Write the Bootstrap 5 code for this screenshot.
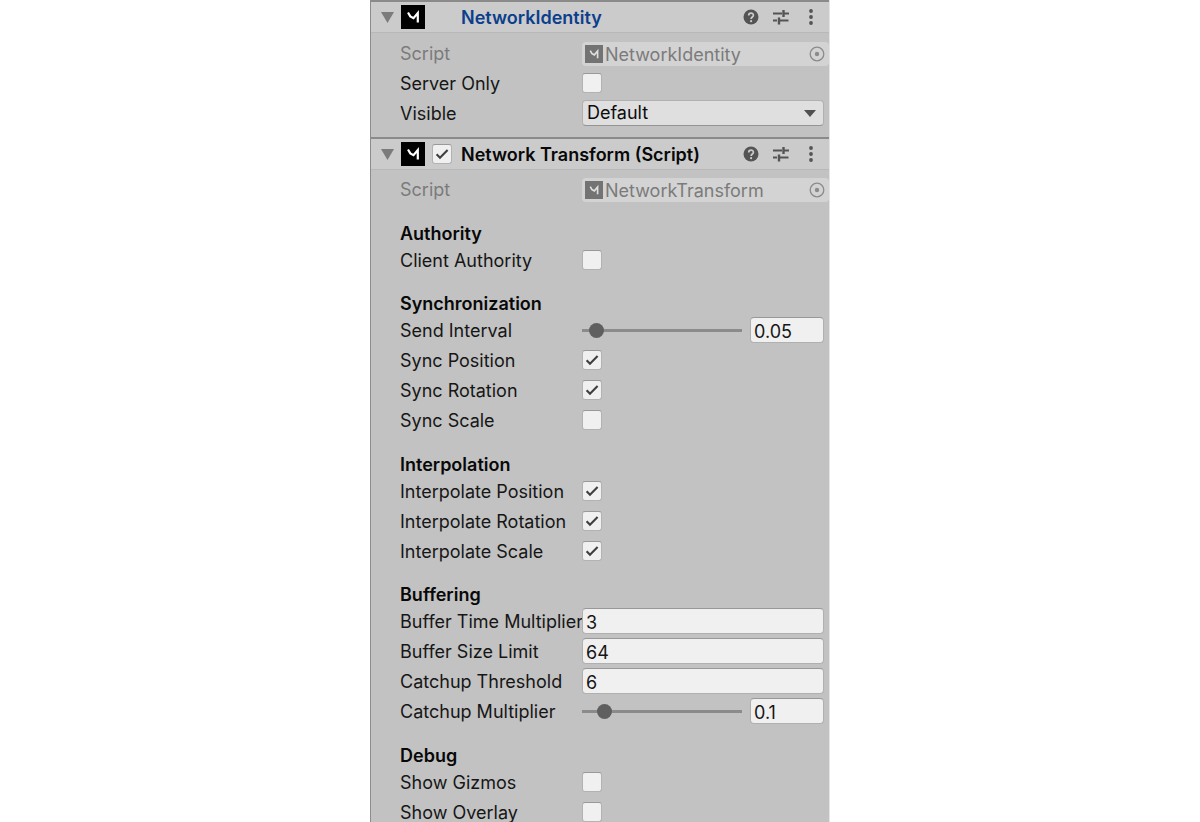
<!DOCTYPE html>
<html lang="en">
<head>
<meta charset="utf-8">
<meta name="viewport" content="width=device-width, initial-scale=1">
<title>Inspector</title>
<link href="https://cdn.jsdelivr.net/npm/bootstrap@5.3.0/dist/css/bootstrap.min.css" rel="stylesheet">
<style>
  body { font: 18px/24px Inter, "Liberation Sans", sans-serif; color: #161616; background: #fff; }
  .inspector { max-width: 460px; background: #c2c2c2; border-left: 1px solid #8c8c90; border-right: 1px solid #e4e4e4; scrollbar-width: none; }
  .inspector::-webkit-scrollbar { display: none; }

  /* component header */
  .comp-head { height: 33px; padding: 0 10px; gap: 7px; background: #cbcbcb; border-top: 2px solid #8a8a8a; border-bottom: 1px solid #b8b8b8; }
  .comp-title { font-size: 18px; line-height: 24px; padding: 2px 0 0 2px; color: #080808; }
  .comp-title a { color: #0b3f8c; }
  .plain-btn { border: 0; padding: 0; background: none; color: #545454; line-height: 0; }
  .tool-set { gap: 14px; }
  .check-space { width: 20px; }

  /* property rows */
  .comp-body { padding: 5px 5px 9px 29px; }
  .comp-body-next { padding-top: 4px; }
  .prop { display: grid; grid-template-columns: 182px minmax(0, 1fr); align-items: center; height: 30px; white-space: nowrap; }
  .prop > label { padding-top: 2px; }
  .prop-group { padding-top: 18px; }
  .prop-group:nth-of-type(even) { padding-top: 17px; }
  .prop-group legend { font-size: 18px; line-height: 24px; height: 23px; margin: 0; font-weight: 600; color: #080808; }
  .dimmed { color: #7b7b7b; }

  .tick { appearance: none; width: 20px; height: 20px; margin: 0; border: 1px solid #b2b2b2; border-top-color: #999; border-radius: 3px; background: #f0f0f0 center / 18px 18px no-repeat; }
  .tick:checked { background-image: url("data:image/svg+xml,%3Csvg xmlns='http://www.w3.org/2000/svg' viewBox='0 0 18 18'%3E%3Cpath d='M3.6 9.2 7 12.8 14.6 5' fill='none' stroke='%23404040' stroke-width='2.1'/%3E%3C/svg%3E"); }
  .text-box { width: 100%; height: 26px; padding: 2px 3px 0; border: 1px solid #b0b0b0; border-top-color: #989898; border-radius: 4px; background: #f0f0f0; color: #161616; }
  .num-box { width: 74px; }
  .drop { appearance: none; width: 100%; height: 26px; padding: 0 4px; border: 1px solid #b0b0b0; border-bottom-color: #949494; border-radius: 4px; color: #0c0c0c;
    background: #dfdfdf url("data:image/svg+xml,%3Csvg xmlns='http://www.w3.org/2000/svg' viewBox='0 0 12 7'%3E%3Cpath d='M0 0H12L6 7z' fill='%23505050'/%3E%3C/svg%3E") right 7px center / 12px 7px no-repeat; }
  .obj-field { height: 24px; margin: 1px -5px 0 0; padding-left: 3px; border-radius: 4px; background: #d3d3d3; }
  .obj-icon { background: #737373; color: #dedede; }
  .obj-field input { min-width: 0; height: 24px; padding: 2px 0 0 2px; border: 0; background: none; color: #7b7b7b; }
  .obj-pick { padding: 0 4px; color: #8b8b8b; }

  .track { appearance: none; width: 160px; min-width: 0; height: 15px; margin: 0; background: linear-gradient(#8b8b8b, #8b8b8b) center / 100% 3px no-repeat; }
  .track::-webkit-slider-thumb { -webkit-appearance: none; width: 15px; height: 15px; border-radius: 50%; background: #5f5f5f; }
  .track::-moz-range-thumb { width: 15px; height: 15px; border: 0; border-radius: 50%; background: #5f5f5f; }
</style>
</head>
<body>
<svg class="d-none" aria-hidden="true">
  <symbol id="fold" viewBox="0 0 13 11"><path d="M0 0H13L6.500 11z" fill="#7b7b7b"/></symbol>
  <symbol id="mirror" viewBox="0 0 24 24"><path d="M7 7.500 9.300 11.400 12.500 13.200 16.800 8V17.500" fill="none" stroke="currentColor" stroke-width="2.200"/></symbol>
  <symbol id="help" viewBox="0 0 16 16"><circle cx="8" cy="8" r="7.500" fill="currentColor"/><path d="M5.700 6.500C5.700 3.400 10.400 3.400 10.400 6.300 10.400 8 8.100 8 8.100 10" fill="none" stroke="#cbcbcb" stroke-width="1.700"/><circle cx="8.100" cy="12.200" r="1.100" fill="#cbcbcb"/></symbol>
  <symbol id="preset" viewBox="0 0 16 16"><path d="M0 4.500H9M10.500 4.500H16M0 11.500H4M6.500 11.500H15.500" fill="none" stroke="currentColor" stroke-width="1.800"/><path d="M10.500 1V8M6 8.500V15.500" fill="none" stroke="currentColor" stroke-width="2.400"/></symbol>
  <symbol id="dots" viewBox="0 0 16 16"><g fill="currentColor"><circle cx="8" cy="2" r="1.900"/><circle cx="8" cy="8" r="1.900"/><circle cx="8" cy="14" r="1.900"/></g></symbol>
  <symbol id="target" viewBox="0 0 16 16"><circle cx="8" cy="8" r="6.800" fill="none" stroke="currentColor" stroke-width="1.300"/><circle cx="8" cy="8" r="2.200" fill="currentColor"/></symbol>
</svg>

<main class="inspector mx-auto vh-100 overflow-auto">
  <section>
    <header class="comp-head d-flex align-items-center">
      <button class="plain-btn" aria-label="Collapse NetworkIdentity"><svg width="13" height="11"><use href="#fold"/></svg></button>
      <svg class="bg-black text-white flex-shrink-0" width="24" height="24"><use href="#mirror"/></svg>
      <span class="check-space"></span>
      <h2 class="comp-title fw-semibold mb-0 me-auto"><a href="#" class="text-decoration-none">NetworkIdentity</a></h2>
      <div class="tool-set d-flex">
        <button class="plain-btn" aria-label="Help"><svg width="16" height="16"><use href="#help"/></svg></button>
        <button class="plain-btn" aria-label="Presets"><svg width="16" height="16"><use href="#preset"/></svg></button>
        <button class="plain-btn" aria-label="More"><svg width="16" height="16"><use href="#dots"/></svg></button>
      </div>
    </header>
    <div class="comp-body">
      <div class="prop dimmed"><label for="script1">Script</label>
        <div class="obj-field d-flex align-items-center"><svg width="18" height="18" class="obj-icon flex-shrink-0"><use href="#mirror"/></svg><input id="script1" class="flex-grow-1" value="NetworkIdentity" disabled><button class="plain-btn obj-pick" aria-label="Pick script" disabled><svg width="16" height="16"><use href="#target"/></svg></button></div></div>
      <div class="prop"><label for="serverOnly">Server Only</label><input class="tick" type="checkbox" id="serverOnly"></div>
      <div class="prop"><label for="visible">Visible</label><select class="drop" id="visible"><option>Default</option></select></div>
    </div>
  </section>

  <section>
    <header class="comp-head d-flex align-items-center">
      <button class="plain-btn" aria-label="Collapse Network Transform"><svg width="13" height="11"><use href="#fold"/></svg></button>
      <svg class="bg-black text-white flex-shrink-0" width="24" height="24"><use href="#mirror"/></svg>
      <input class="tick" type="checkbox" id="enabled" aria-label="Enabled" checked>
      <h2 class="comp-title fw-semibold mb-0 me-auto"><label for="enabled">Network Transform (Script)</label></h2>
      <div class="tool-set d-flex">
        <button class="plain-btn" aria-label="Help"><svg width="16" height="16"><use href="#help"/></svg></button>
        <button class="plain-btn" aria-label="Presets"><svg width="16" height="16"><use href="#preset"/></svg></button>
        <button class="plain-btn" aria-label="More"><svg width="16" height="16"><use href="#dots"/></svg></button>
      </div>
    </header>
    <div class="comp-body comp-body-next">
      <div class="prop dimmed"><label for="script2">Script</label>
        <div class="obj-field d-flex align-items-center"><svg width="18" height="18" class="obj-icon flex-shrink-0"><use href="#mirror"/></svg><input id="script2" class="flex-grow-1" value="NetworkTransform" disabled><button class="plain-btn obj-pick" aria-label="Pick script" disabled><svg width="16" height="16"><use href="#target"/></svg></button></div></div>

      <fieldset class="prop-group"><legend>Authority</legend>
        <div class="prop"><label for="clientAuth">Client Authority</label><input class="tick" type="checkbox" id="clientAuth"></div>
      </fieldset>

      <fieldset class="prop-group"><legend>Synchronization</legend>
        <div class="prop"><label for="sendInt">Send Interval</label>
          <div class="d-flex align-items-center justify-content-between"><input class="track" type="range" id="sendInt" min="0" max="1" step="0.01" value="0.05"><input class="text-box num-box" aria-label="Send Interval value" value="0.05"></div></div>
        <div class="prop"><label for="syncPos">Sync Position</label><input class="tick" type="checkbox" id="syncPos" checked></div>
        <div class="prop"><label for="syncRot">Sync Rotation</label><input class="tick" type="checkbox" id="syncRot" checked></div>
        <div class="prop"><label for="syncScale">Sync Scale</label><input class="tick" type="checkbox" id="syncScale"></div>
      </fieldset>

      <fieldset class="prop-group"><legend>Interpolation</legend>
        <div class="prop"><label for="intPos">Interpolate Position</label><input class="tick" type="checkbox" id="intPos" checked></div>
        <div class="prop"><label for="intRot">Interpolate Rotation</label><input class="tick" type="checkbox" id="intRot" checked></div>
        <div class="prop"><label for="intScale">Interpolate Scale</label><input class="tick" type="checkbox" id="intScale" checked></div>
      </fieldset>

      <fieldset class="prop-group"><legend>Buffering</legend>
        <div class="prop"><label for="bufTime">Buffer Time Multiplier</label><input class="text-box" id="bufTime" value="3"></div>
        <div class="prop"><label for="bufSize">Buffer Size Limit</label><input class="text-box" id="bufSize" value="64"></div>
        <div class="prop"><label for="catchThr">Catchup Threshold</label><input class="text-box" id="catchThr" value="6"></div>
        <div class="prop"><label for="catchMul">Catchup Multiplier</label>
          <div class="d-flex align-items-center justify-content-between"><input class="track" type="range" id="catchMul" min="0" max="1" step="0.01" value="0.1"><input class="text-box num-box" aria-label="Catchup Multiplier value" value="0.1"></div></div>
      </fieldset>

      <fieldset class="prop-group"><legend>Debug</legend>
        <div class="prop"><label for="gizmos">Show Gizmos</label><input class="tick" type="checkbox" id="gizmos"></div>
        <div class="prop"><label for="overlay">Show Overlay</label><input class="tick" type="checkbox" id="overlay"></div>
      </fieldset>
    </div>
  </section>
</main>
<script src="https://cdn.jsdelivr.net/npm/bootstrap@5.3.0/dist/js/bootstrap.bundle.min.js"></script>
</body>
</html>
